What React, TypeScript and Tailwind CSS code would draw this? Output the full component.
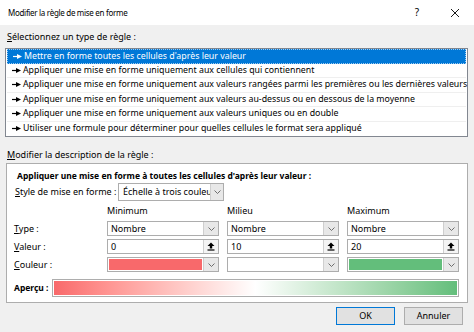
import React from "react";

const Arrow = ({ color = "#000" }: { color?: string }) => (
  <svg width="9" height="5" viewBox="0 0 9 5" className="shrink-0">
    <path d="M0 2.5H5" stroke={color} strokeWidth="1.2" />
    <path d="M4 0L9 2.5L4 5Z" fill={color} />
  </svg>
);

const Chevron = () => (
  <svg width="7" height="4" viewBox="0 0 7 4">
    <polyline points="0.5,0.5 3.5,3.5 6.5,0.5" fill="none" stroke="#606060" strokeWidth="0.9" />
  </svg>
);

const UpIcon = () => (
  <svg width="8" height="9" viewBox="0 0 8 9">
    <path d="M4 0.5L7.5 4H5.2V6.5H2.8V4H0.5Z" fill="#000" />
    <path d="M0.5 8H7.5" stroke="#000" strokeWidth="1.2" />
  </svg>
);

function Select({ text }: { text: string }) {
  return (
    <div className="h-[15px] border border-[#adadad] bg-white flex items-stretch">
      <div className="flex-1 pl-[3px] leading-[13px] overflow-hidden whitespace-nowrap">{text}</div>
      <div className="w-[15px] bg-[#e8e8e8] border-l border-[#cfcfcf] flex items-center justify-center">
        <Chevron />
      </div>
    </div>
  );
}

function ValueInput({ text }: { text: string }) {
  return (
    <div className="h-[15px] border border-[#adadad] bg-white flex items-stretch">
      <div className="flex-1 pl-[3px] leading-[13px] overflow-hidden whitespace-nowrap">{text}</div>
      <div className="w-[15px] bg-[#f4f4f4] border-l border-[#cfcfcf] flex items-center justify-center">
        <UpIcon />
      </div>
    </div>
  );
}

function ColorSelect({ color }: { color: string }) {
  return (
    <div className="h-[15px] border border-[#adadad] bg-white flex items-stretch">
      <div className="flex-1 p-[1px]">
        <div className="w-full h-full" style={{ backgroundColor: color }} />
      </div>
      <div className="w-[15px] bg-[#e8e8e8] border-l border-[#cfcfcf] flex items-center justify-center">
        <Chevron />
      </div>
    </div>
  );
}

const rules = [
  "Mettre en forme toutes les cellules d'après leur valeur",
  "Appliquer une mise en forme uniquement aux cellules qui contiennent",
  "Appliquer une mise en forme uniquement aux valeurs rangées parmi les premières ou les dernières valeurs",
  "Appliquer une mise en forme uniquement aux valeurs au-dessus ou en dessous de la moyenne",
  "Appliquer une mise en forme uniquement aux valeurs uniques ou en double",
  "Utiliser une formule pour déterminer pour quelles cellules le format sera appliqué",
];

export default function App() {
  return (
    <div className="w-[474px] h-[332px] bg-[#f0f0f0] overflow-hidden font-['Noto_Sans',sans-serif] text-[9px] text-black">
      <div className="h-[25px] bg-white flex items-center pl-[8px] pr-[15px]">
        <span className="flex-1 text-[8px] tracking-[-0.3px]">Modifier la règle de mise en forme</span>
        <span className="mr-[32px] text-[10px]">?</span>
        <svg width="8" height="8" viewBox="0 0 8 8">
          <path d="M0 0L8 8M8 0L0 8" stroke="#000" strokeWidth="0.9" />
        </svg>
      </div>

      <div className="px-[5px]">
        <div className="mt-[5px] h-[14px] leading-[14px] pl-[2px]">
          <span className="underline">S</span>électionnez un type de règle :
        </div>
        <div className="mt-[4px] w-[463px] border border-[#828790] bg-white px-[1px]">
          {rules.map((r, i) => (
            <div
              key={i}
              className={
                "h-[14.5px] flex items-center pl-[5px] gap-[2px] whitespace-nowrap " +
                (i === 0
                  ? "bg-[#0078d7] text-white border border-dotted border-[#9ecbf0]"
                  : i < rules.length - 1
                  ? "border-b border-[#efefef]"
                  : "")
              }
            >
              <Arrow color={i === 0 ? "#fff" : "#000"} />
              <span className="leading-[13px] text-[8.8px]">{r}</span>
            </div>
          ))}
        </div>

        <div className="mt-[11px] h-[14px] leading-[14px] pl-[2px]">
          <span className="underline">M</span>odifier la description de la règle :
        </div>
        <div className="mt-[1px] ml-[1px] w-[462px] border border-[#adadad] bg-white pl-[7px] pt-[5px] pb-[5px]">
          <div className="h-[14px] leading-[14px] ml-[3px] font-bold text-[8.5px] whitespace-nowrap">
            Appliquer une mise en forme à toutes les cellules d'après leur valeur :
          </div>
          <div className="flex items-center h-[18px] ml-[1px]">
            <span className="w-[103px] shrink-0 whitespace-nowrap">
              <span className="underline">S</span>tyle de mise en forme :
            </span>
            <div className="w-[106px] h-[18px] border border-[#adadad] bg-white flex items-stretch">
              <div className="flex-1 pl-[4px] leading-[16px] overflow-hidden whitespace-nowrap">
                Échelle à trois couleurs
              </div>
              <div className="w-[13px] bg-[#e8e8e8] border-l border-[#cfcfcf] flex items-center justify-center">
                <Chevron />
              </div>
            </div>
          </div>

          <div className="mt-[3px] grid grid-cols-[85px_112px_112px_112px] gap-x-[8px] gap-y-[3px] items-center">
            <div className="h-[14px]" />
            <div className="h-[14px] leading-[14px]">Minimum</div>
            <div className="h-[14px] leading-[14px]">Milieu</div>
            <div className="h-[14px] leading-[14px]">Maximum</div>

            <div>
              <span className="underline">T</span>ype :
            </div>
            <Select text="Nombre" />
            <Select text="Nombre" />
            <Select text="Nombre" />

            <div>
              <span className="underline">V</span>aleur :
            </div>
            <ValueInput text="0" />
            <ValueInput text="10" />
            <ValueInput text="20" />

            <div>
              <span className="underline">C</span>ouleur :
            </div>
            <ColorSelect color="#f8696b" />
            <ColorSelect color="#ffffff" />
            <ColorSelect color="#63be7b" />
          </div>

          <div className="mt-[7px] flex items-center">
            <span className="w-[38px] shrink-0 font-bold text-[8.5px] whitespace-nowrap">Aperçu :</span>
            <div className="w-[407px] h-[18px] border border-[#adadad] p-[1px] bg-white">
              <div className="w-full h-full bg-linear-to-r from-[#f8696b] via-white to-[#63be7b]" />
            </div>
          </div>
        </div>

        <div className="mt-[4px] flex justify-end pr-[6px] gap-[9px]">
          <div className="w-[59px] h-[18px] border border-[#0078d7] bg-[#e1e1e1] flex items-center justify-center">
            OK
          </div>
          <div className="w-[59px] h-[18px] border border-[#adadad] bg-[#e1e1e1] flex items-center justify-center">
            Annuler
          </div>
        </div>
      </div>
    </div>
  );
}
